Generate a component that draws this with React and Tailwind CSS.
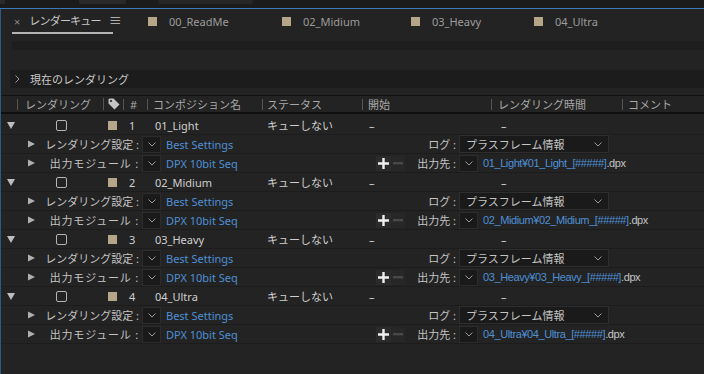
import React from 'react'

const jp = { fontFamily: '"Noto Sans", "Noto Sans CJK JP", sans-serif' }
const narrow = { fontFamily: '"Liberation Sans", "Noto Sans CJK JP", sans-serif' }

const items = [
  { n: 1, name: '01_Light' },
  { n: 2, name: '02_Midium' },
  { n: 3, name: '03_Heavy' },
  { n: 4, name: '04_Ultra' },
]

function Chevron({ className = '' }) {
  return (
    <svg width="8" height="5" viewBox="0 0 8 5" className={className}>
      <path d="M0.5 0.5 L4 4 L7.5 0.5" fill="none" stroke="#9a9a9a" strokeWidth="1" />
    </svg>
  )
}

function Tri({ down }) {
  return (
    <svg width="8" height="8" viewBox="0 0 8 8">
      {down ? <path d="M0 1 L8 1 L4 8 Z" fill="#bdbdbd" /> : <path d="M1 0.5 L8 4 L1 7.5 Z" fill="#b0b0b0" />}
    </svg>
  )
}

function SmallDrop() {
  return (
    <div className="w-[19px] h-[17px] bg-[#1a1a1a] border border-[#2c2c2c] flex items-center justify-center">
      <Chevron />
    </div>
  )
}

function TagIcon() {
  return (
    <svg width="12" height="12" viewBox="0 0 12 12">
      <path d="M0.5 1.5 L0.5 5.5 L6.5 11.5 L11.5 6.5 L5.5 0.5 L1.5 0.5 Z" fill="#c4c4c4" />
      <circle cx="3" cy="3" r="1.1" fill="#232323" />
    </svg>
  )
}

function Group({ n, name }) {
  return (
    <div>
      <div className="flex items-center h-[19px] border-b border-[#1c1c1c] text-[#cfcfcf]">
        <div className="w-[17px] pl-[6px] flex items-center"><Tri down /></div>
        <div className="w-[86px] flex justify-center">
          <div className="w-[11px] h-[11px] border-[1.5px] border-[#b4b4b4] rounded-[2px]" />
        </div>
        <div className="w-[20px] pl-[4px]"><div className="w-[9px] h-[9px] bg-[#b6a689]" /></div>
        <div className="w-[24px] pl-[5px]">{n}</div>
        <div className="w-[115px] pl-[7px]">{name}</div>
        <div className="w-[100px] pl-[4px]">キューしない</div>
        <div className="w-[129px] pl-[6px]">–</div>
        <div className="w-[131px] pl-[9px]">–</div>
      </div>
      <div className="flex items-center h-[19px] border-b border-[#1c1c1c] text-[#c4c4c4]">
        <div className="w-[26px]" />
        <div className="w-[12px] flex items-center"><Tri /></div>
        <div className="w-[103px] text-right pr-[3px]">レンダリング設定 :</div>
        <SmallDrop />
        <div className="w-[202px] pl-[5px] text-[#4e90d6]">Best Settings</div>
        <div className="w-[96px] text-right pr-[3px]">ログ :</div>
        <div className="w-[150px] h-[18px] bg-[#1a1a1a] border border-[#2e2e2e] flex items-center justify-between pl-[6px] pr-[6px]">
          <span>プラスフレーム情報</span>
          <Chevron />
        </div>
      </div>
      <div className="flex items-center h-[19px] border-b border-[#1c1c1c] text-[#c4c4c4]">
        <div className="w-[26px]" />
        <div className="w-[12px] flex items-center"><Tri /></div>
        <div className="w-[103px] text-right pr-[3px] tracking-[0.8px]">出力モジュール :</div>
        <SmallDrop />
        <div className="w-[215px] pl-[5px] text-[#4e90d6]">DPX 10bit Seq</div>
        <div className="flex w-[83px] items-center">
          <div className="w-[15px] h-[15px] bg-[#2b2b2b] flex items-center justify-center">
            <svg width="11" height="11" viewBox="0 0 11 11"><path d="M4.3 0 H6.7 V4.3 H11 V6.7 H6.7 V11 H4.3 V6.7 H0 V4.3 H4.3 Z" fill="#f0f0f0" /></svg>
          </div>
          <div className="w-[14px] h-[15px] bg-[#272727] flex items-center justify-center">
            <svg width="10" height="3" viewBox="0 0 10 3"><rect width="10" height="2.4" fill="#484848" /></svg>
          </div>
          <div className="flex-1 text-right pr-[3px]">出力先 :</div>
        </div>
        <SmallDrop />
        <div className="pl-[5px] text-[#4e90d6] text-[11px] tracking-[-0.4px]" style={narrow}>{name}¥{name}_[#####]<span className="text-[#c4c4c4]">.dpx</span></div>
      </div>
    </div>
  )
}

export default function App() {
  const tabs = [
    { label: '00_ReadMe', w: 'w-[134px]' },
    { label: '02_Midium', w: 'w-[129px]' },
    { label: '03_Heavy', w: 'w-[123px]' },
    { label: '04_Ultra', w: 'w-[100px]' },
  ]
  return (
    <div className="w-[704px] h-[374px] overflow-hidden bg-[#232323] text-[11px] leading-none whitespace-nowrap" style={jp}>
      <div className="h-[8px] bg-[#1b1b1b] flex gap-[4px] items-start">
        <div className="w-[5px] h-[4px] bg-[#2a2a2a]" />
        <div className="ml-[70px] w-[47px] h-[4px] bg-[#2a2a2a] rounded-b-[2px]" />
        <div className="ml-[28px] w-[95px] h-[4px] bg-[#262626] rounded-b-[2px]" />
      </div>
      <div className="h-[1px] bg-[#3a79b8]" />
      <div className="h-[365px] border-l border-[#2c5a86]">
        <div className="h-[25px] flex items-center">
          <div className="ml-[11px] w-[101px] h-[25px] flex items-center border-b-2 border-[#b4b4b4] text-[#c8c8c8]">
            <span className="text-[#8a8a8a] ml-[2px] mt-[1px]">×</span>
            <span className="ml-[9px] tracking-[-0.8px]">レンダーキュー</span>
            <span className="ml-[8px] text-[13px]">≡</span>
          </div>
          <div className="ml-[35px] flex text-[#9c9c9c]">
            {tabs.map(t => (
              <div key={t.label} className={`${t.w} flex items-center`}>
                <div className="w-[9px] h-[9px] bg-[#b6a689]" />
                <span className="ml-[12px]">{t.label}</span>
              </div>
            ))}
          </div>
        </div>
        <div className="h-[7px]" />
        <div className="ml-[11px] h-[9px] bg-[#1e1e1e]" />
        <div className="h-[20px]" />
        <div className="ml-[9px] h-[18px] bg-[#1c1c1c] flex items-center text-[#c8c8c8]">
          <svg width="5" height="8" viewBox="0 0 5 8" className="ml-[5px]"><path d="M0.5 0.5 L4 4 L0.5 7.5" fill="none" stroke="#9a9a9a" strokeWidth="1" /></svg>
          <span className="ml-[10px]">現在のレンダリング</span>
        </div>
        <div className="h-[7px]" />
        <div className="h-[1px] bg-[#111111]" />
        <div className="h-[18px] flex items-center text-[#a8a8a8] border-b-2 border-[#0f0f0f]">
          <div className="w-[16px]" />
          <div className="w-[86px] border-l border-[#555] pl-[7px]">レンダリング</div>
          <div className="w-[20px] border-l border-[#555] pl-[4px] flex items-center"><TagIcon /></div>
          <div className="w-[24px] border-l border-[#555] pl-[6px]">#</div>
          <div className="w-[115px] border-l border-[#555] pl-[5px]">コンポジション名</div>
          <div className="w-[100px] border-l border-[#555] pl-[4px]">ステータス</div>
          <div className="w-[129px] border-l border-[#555] pl-[5px]">開始</div>
          <div className="w-[131px] border-l border-[#555] pl-[6px]">レンダリング時間</div>
          <div className="flex-1 border-l border-[#555] pl-[5px]">コメント</div>
        </div>
        <div className="pt-[2px]">
          {items.map(i => <Group key={i.n} {...i} />)}
        </div>
      </div>
    </div>
  )
}
